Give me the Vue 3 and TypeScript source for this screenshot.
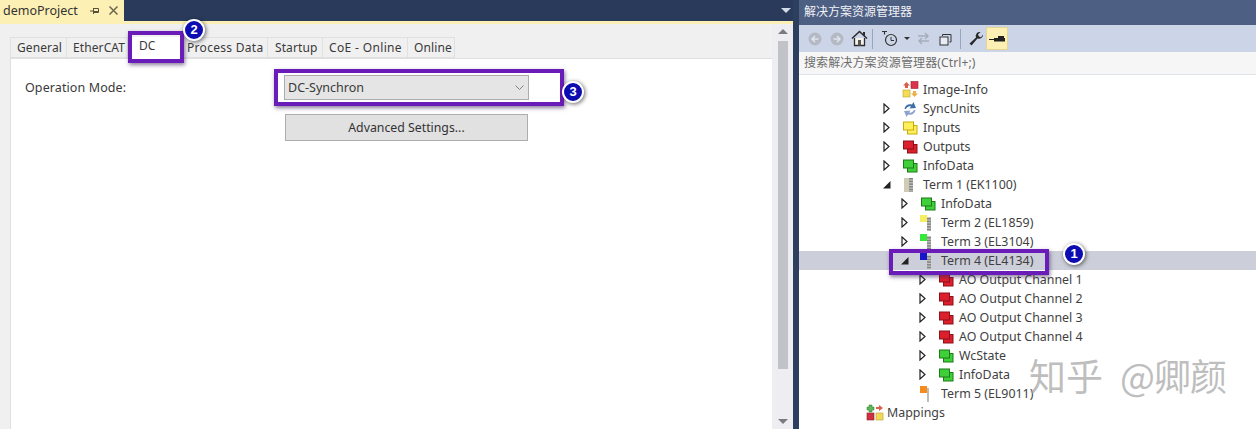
<script setup lang="ts">
type Icon = 'image' | 'sync' | 'yellow' | 'red' | 'green' | 'term' | 'map' | 'none'
interface Row { label: string; depth: number; icon: Icon; expand: '' | 'open' | 'closed'; chip?: string; selected?: boolean; plain?: boolean }

const tabs = ['General', 'EtherCAT', 'DC', 'Process Data', 'Startup', 'CoE - Online', 'Online']
const groupColors: Record<string, string[]> = {
  yellow: ['#fdf05a', '#c9a90e'],
  red: ['#dc1f2c', '#8e1018'],
  green: ['#3fcf38', '#1c7a18'],
}
const rows: Row[] = [
  { label: 'Image-Info', depth: 2, icon: 'image', expand: '' },
  { label: 'SyncUnits', depth: 2, icon: 'sync', expand: 'closed' },
  { label: 'Inputs', depth: 2, icon: 'yellow', expand: 'closed' },
  { label: 'Outputs', depth: 2, icon: 'red', expand: 'closed' },
  { label: 'InfoData', depth: 2, icon: 'green', expand: 'closed' },
  { label: 'Term 1 (EK1100)', depth: 2, icon: 'term', expand: 'open' },
  { label: 'InfoData', depth: 3, icon: 'green', expand: 'closed' },
  { label: 'Term 2 (EL1859)', depth: 3, icon: 'term', expand: 'closed', chip: '#f6ee5c' },
  { label: 'Term 3 (EL3104)', depth: 3, icon: 'term', expand: 'closed', chip: '#35e83a' },
  { label: 'Term 4 (EL4134)', depth: 3, icon: 'term', expand: 'open', chip: '#1616c8', selected: true },
  { label: 'AO Output Channel 1', depth: 4, icon: 'red', expand: 'closed' },
  { label: 'AO Output Channel 2', depth: 4, icon: 'red', expand: 'closed' },
  { label: 'AO Output Channel 3', depth: 4, icon: 'red', expand: 'closed' },
  { label: 'AO Output Channel 4', depth: 4, icon: 'red', expand: 'closed' },
  { label: 'WcState', depth: 4, icon: 'green', expand: 'closed' },
  { label: 'InfoData', depth: 4, icon: 'green', expand: 'closed' },
  { label: 'Term 5 (EL9011)', depth: 3, icon: 'term', expand: '', chip: '#f58a1f', plain: true },
  { label: 'Mappings', depth: 0, icon: 'map', expand: '' },
]
const indent = (d: number) => ({ paddingLeft: `${88 + d * 18}px` })
</script>

<template>
  <div class="app">
    <section class="doc">
      <header class="doc-head">
        <div class="doc-tab">
          <span class="doc-title">demoProject</span>
          <svg class="pin" width="12" height="12" viewBox="0 0 12 12"><path d="M1 6h3M4.500 3v6M4.500 3.500h5v4h-5M4.500 6.500h5" fill="none" stroke="#57503a" stroke-width="1" /></svg>
          <svg class="close" width="11" height="11" viewBox="0 0 11 11"><path d="M1.500 1.500l8 8M9.500 1.500l-8 8" stroke="#6b6550" stroke-width="1.500" /></svg>
        </div>
        <span class="doc-menu"></span>
      </header>
      <div class="doc-body">
        <div class="editor">
          <nav class="tabs">
            <span v-for="t in tabs" :key="t" class="tab" :class="{ active: t === 'DC' }">{{ t }}</span>
          </nav>
          <div class="panel">
            <div class="form">
              <label class="field-label">Operation Mode:</label>
              <div class="select">
                <span>DC-Synchron</span>
                <svg width="9" height="5" viewBox="0 0 9 5"><path d="M.5.500L4.500 4.500 8.500.500" fill="none" stroke="#808080" stroke-width="1" /></svg>
              </div>
              <span></span>
              <button class="adv" type="button">Advanced Settings...</button>
            </div>
          </div>
        </div>
        <aside class="scroll">
          <span class="arrow up"></span>
          <span class="thumb"></span>
          <span class="arrow down"></span>
        </aside>
      </div>
    </section>

    <section class="explorer">
      <header class="exp-head">解决方案资源管理器</header>
      <div class="toolbar">
        <svg width="16" height="16" viewBox="0 0 16 16"><circle cx="8" cy="8" r="6.500" fill="#b4b9c4" /><path d="M11.500 8h-6M8 5L5 8l3 3" fill="none" stroke="#dfe4ee" stroke-width="1.500" /></svg>
        <svg class="t6" width="16" height="16" viewBox="0 0 16 16"><circle cx="8" cy="8" r="6.500" fill="#b4b9c4" /><path d="M4.500 8h6M8 5l3 3-3 3" fill="none" stroke="#dfe4ee" stroke-width="1.500" /></svg>
        <svg class="t6" width="17" height="17" viewBox="0 0 17 17"><path d="M1 8.500L8.500 1.500 16 8.500" fill="none" stroke="#2c2c2c" stroke-width="1.600" /><path d="M3.500 8v7.500h10V8" fill="#f4f1e8" stroke="#2c2c2c" stroke-width="1.300" /><rect x="7" y="10" width="3" height="5.500" fill="#555" /><rect x="12" y="2" width="2" height="4" fill="#2c2c2c" /></svg>
        <i class="sep"></i>
        <svg class="t3" width="18" height="17" viewBox="0 0 18 17"><circle cx="10" cy="10" r="5.500" fill="none" stroke="#333" stroke-width="1.200" /><path d="M10 7v3.500h3" fill="none" stroke="#333" /><path d="M1 1.500h5M3.500 1.500v3" stroke="#333" stroke-width="1.200" /></svg>
        <span class="caret"></span>
        <svg class="t8" width="15" height="15" viewBox="0 0 15 15"><path d="M2 5h10M9 2l3 3-3 3" fill="none" stroke="#a5acb9" stroke-width="1.400" /><path d="M13 10H3M6 7l-3 3 3 3" fill="none" stroke="#a5acb9" stroke-width="1.400" /></svg>
        <svg class="t8b" width="14" height="14" viewBox="0 0 14 14"><rect x="1" y="5" width="8" height="8" fill="#e8ecf4" stroke="#333" /><path d="M3.500 4V2.500H12V10h-1.500" fill="none" stroke="#333" /></svg>
        <i class="sep s2"></i>
        <svg class="t7" width="16" height="16" viewBox="0 0 16 16"><path d="M15 3.500a4 4 0 0 1-5.500 4L3.500 14.500 1.500 12.500 8 6.500a4 4 0 0 1 4.500-5.500l-2.500 2.500 1 2 2 .8z" fill="#2a2a2a" /></svg>
        <span class="pin-btn"><svg width="16" height="7" viewBox="0 0 16 7"><path d="M0 4.500h5" stroke="#222" /><rect x="5" y="3" width="11" height="3.500" fill="#222" /><rect x="9" y="1" width="6" height="2" fill="#222" /></svg></span>
      </div>
      <div class="search">搜索解决方案资源管理器(Ctrl+;)</div>
      <ul class="tree">
        <li v-for="(r, i) in rows" :key="i" class="row" :class="{ selected: r.selected }" :style="indent(r.depth)">
          <svg v-if="r.expand === 'closed'" class="twist" width="7" height="11" viewBox="0 0 7 11"><path d="M1 1l5 4.500-5 4.500z" fill="none" stroke="#222" stroke-width="1.200" /></svg>
          <svg v-else-if="r.expand === 'open'" class="twist" width="8" height="8" viewBox="0 0 8 8"><path d="M0 7.500L7.500 0v7.500z" fill="#222" /></svg>
          <span class="ico">
            <svg v-if="r.icon === 'image'" width="18" height="17" viewBox="0 0 18 17">
              <rect x="9" y="0.500" width="7" height="7" fill="#d9344a" stroke="#9a2030" stroke-width=".6" />
              <rect x="1" y="9" width="7" height="7" fill="#f4dc55" stroke="#bda62e" stroke-width=".6" />
              <path d="M4.500 1L1 4.500h2V7h3V4.500h2z" fill="#d9604c" />
              <path d="M12.500 16L16 12.500h-2V10h-3v2.500H9z" fill="#eeb04d" />
            </svg>
            <svg v-else-if="r.icon === 'sync'" width="16" height="16" viewBox="0 0 16 16">
              <path d="M2.500 8C3 4 6.500 2.500 10 3.500L11.500 1l2.500 6-6.500.5L9 5.500C7 5 5 6 4 8z" fill="#3f6fa8" />
              <path d="M13.500 9c-.6 4-4 5.400-7.500 4.500L4.500 16 2 10l6.500-.5L7 11.500c2 .5 4-.5 5-2.500z" fill="#8ea2cf" />
            </svg>
            <svg v-else-if="r.icon === 'yellow' || r.icon === 'red' || r.icon === 'green'" width="16" height="14" viewBox="0 0 16 14">
              <rect x="5.500" y="4.500" width="9.500" height="8.500" :fill="groupColors[r.icon][0]" :stroke="groupColors[r.icon][1]" />
              <rect x="1.500" y="1" width="10" height="8" :fill="groupColors[r.icon][0]" :stroke="groupColors[r.icon][1]" />
            </svg>
            <svg v-else-if="r.icon === 'term'" width="18" height="16" viewBox="0 0 18 16">
              <rect v-if="r.chip" x="0" y="0" width="7" height="7" :fill="r.chip" />
              <rect v-if="!r.chip" x="2" y="1" width="5" height="14" fill="#cfcbb5" />
              <template v-if="r.plain">
                <rect x="7" y="2" width="2" height="14" fill="#bdbdb8" />
              </template>
              <template v-else>
                <rect x="7" :y="r.chip ? 2 : 1" width="4" height="14" fill="#c4c4c0" />
                <path :d="r.chip ? 'M8 3v13M10 3v13' : 'M8 1v14M10 1v14'" stroke="#444" stroke-dasharray="1.500 1.200" stroke-width="1" />
              </template>
            </svg>
            <svg v-else-if="r.icon === 'map'" width="18" height="17" viewBox="0 0 18 17">
              <rect x="1" y="9" width="7" height="7" fill="#cf3040" stroke="#8f1f2a" stroke-width=".6" />
              <rect x="10" y="9" width="7" height="7" fill="#f2d95a" stroke="#b9a02c" stroke-width=".6" />
              <path d="M3 1h3v2h2v3H6v2H3V6H1V3h2z" fill="#5fb55a" stroke="#2d7a2a" stroke-width=".5" />
              <path d="M10 3h3V1l4 3-4 3V5h-3z" fill="#d9604c" />
            </svg>
          </span>
          <span class="label">{{ r.label }}</span>
        </li>
      </ul>
    </section>

    <i class="mark m-tab"></i>
    <i class="mark m-select"></i>
    <i class="mark m-row"></i>
    <b class="badge b2">2</b>
    <b class="badge b3">3</b>
    <b class="badge b1">1</b>
    <div class="watermark"><span>知乎</span><span class="handle">@卿颜</span></div>
  </div>
</template>

<style>
html, body { margin: 0; background: #fff; overflow: hidden; }
</style>

<style scoped>
.app {
  position: relative;
  width: 1256px;
  height: 429px;
  display: flex;
  overflow: hidden;
  font-family: "Noto Sans", "Noto Sans CJK SC", sans-serif;
  font-size: 12px;
  color: #3a3a3a;
  background: #2c3f5f;
}
.doc { width: 793px; display: flex; flex-direction: column; }
.doc-head { height: 21px; display: flex; justify-content: space-between; align-items: center; background: #293a5a; flex: none; }
.doc-tab { width: 124px; height: 21px; box-sizing: border-box; padding-left: 3px; display: flex; align-items: center; background: #fdf0b4; color: #333; font-size: 12.5px; }
.doc-title { width: 86px; }
.pin { margin-right: 7px; flex: none; }
.close { flex: none; }
.doc-menu { margin-right: 2px; width: 0; height: 0; border: 5px solid transparent; border-top: 5px solid #d4dae8; border-bottom: 0; }
.doc-body { flex: 1; display: flex; border-top: 3px solid #fdf0b4; background: #f0f0f0; min-height: 0; }
.editor { width: 772px; padding: 13px 0 0 10px; box-sizing: border-box; display: flex; flex-direction: column; }
.tabs { height: 21px; display: flex; flex: none; position: relative; }
.tab { box-sizing: border-box; height: 21px; padding: 0 5px 0 7px; border: 1px solid #e0e0e0; border-left: 0; line-height: 20px; white-space: nowrap; font-size: 12px; letter-spacing: .1px; color: #3a3a3a; }
.tab:nth-child(1) { width: 57px; padding-left: 6px; border-left: 1px solid #e0e0e0; }
.tab:nth-child(2) { width: 61px; padding-left: 6px; }
.tab.active { width: 55px; height: 23px; margin-bottom: -2px; background: #fff; border: 0; padding: 0 0 0 11px; line-height: 18px; }
.tab:nth-child(4) { width: 85px; padding-left: 4px; letter-spacing: .3px; }
.tab:nth-child(5) { width: 55px; padding-left: 7px; }
.tab:nth-child(6) { width: 85px; padding-left: 6px; letter-spacing: .35px; }
.tab:nth-child(7) { width: 47px; padding-left: 6px; }
.panel { flex: 1; background: #fff; border-top: 1px solid #e0e0e0; border-left: 1px solid #e0e0e0; padding: 16px 0 0 14px; }
.form { display: grid; grid-template-columns: 259px 245px; grid-template-rows: 25px 27px; row-gap: 14px; }
.field-label { align-self: center; font-size: 12.5px; letter-spacing: .1px; }
.select { box-sizing: border-box; display: flex; justify-content: space-between; align-items: center; padding: 0 4px 0 3px; background: #e5e5e5; border: 1px solid #acacac; font-size: 12.5px; }
.adv { box-sizing: border-box; width: 243px; margin-left: 1px; height: 27px; padding: 0; background: #e1e1e1; border: 1px solid #adadad; color: #333; font: inherit; font-size: 12.3px; }
.scroll { width: 21px; display: flex; flex-direction: column; align-items: center; background: #eeeef2; }
.arrow { flex: none; width: 0; height: 0; border: 5px solid transparent; }
.up { margin-top: 5px; border-bottom: 5px solid #7a7a80; border-top: 0; }
.down { margin-top: 50px; border-top: 5px solid #7a7a80; border-bottom: 0; }
.thumb { width: 10px; height: 328px; margin-top: 7px; background: #c2c3c9; flex: none; }
.explorer { flex: 1; margin-left: 6px; display: flex; flex-direction: column; background: #fff; min-width: 0; }
.exp-head { height: 25px; flex: none; padding-left: 5px; line-height: 24px; background: #4d5f82; color: #f0f2f6; font-size: 12px; }
.toolbar { height: 27px; flex: none; padding-left: 8px; display: flex; align-items: center; background: #ccd5e8; }
.t6 { margin-left: 6px; }
.sep { width: 1px; height: 20px; margin: 0 8px 0 4px; background: #9aa5bd; }
.t3 { flex: none; }
.caret { margin: 0 6px 0 5px; border: 3px solid transparent; border-top: 3px solid #333; border-bottom: 0; }
.t8b { margin-left: 8px; }
.s2 { margin-left: 7px; margin-right: 7px; }
.pin-btn { width: 22px; height: 23px; margin-left: 2px; display: flex; align-items: center; justify-content: center; background: #fdf0b4; box-sizing: border-box; border: 1px solid #e5d590; }
.search { height: 23px; flex: none; padding-left: 5px; line-height: 22px; background: #f6f6f6; color: #6d6d6d; font-size: 12px; letter-spacing: .12px; box-sizing: border-box; border-bottom: 1px solid #e0e4ec; }
.tree { flex: 1; margin: 0; padding: 5px 0 0; list-style: none; background: #fff; }
.row { height: 19px; display: flex; align-items: center; position: relative; white-space: nowrap; }
.row.selected { background: #ccced9; }
.twist { position: absolute; margin-left: -40px; }
.ico { position: absolute; margin-left: -21px; width: 18px; height: 17px; display: flex; align-items: center; justify-content: flex-start; }
.label { font-size: 12.4px; color: #3f3f3f; }
.mark { position: absolute; box-sizing: border-box; border: 4px solid #6a1cb8; box-shadow: 1px 2px 4px rgba(60, 40, 90, .6); pointer-events: none; }
.m-tab { left: 128px; top: 31px; width: 56px; height: 32px; }
.m-select { left: 274px; top: 69px; width: 290px; height: 37px; }
.m-row { left: 889px; top: 249px; width: 160px; height: 26px; }
.badge { position: absolute; box-sizing: border-box; width: 22px; height: 22px; border-radius: 50%; background: #0c0cb0; border: 2px solid #fff; box-shadow: 1px 1px 4px rgba(0, 0, 0, .6); color: #fff; text-align: center; font: 700 13px/18px "Liberation Sans", sans-serif; }
.b2 { left: 183px; top: 19px; }
.b3 { left: 562px; top: 81px; }
.b1 { left: 1063px; top: 243px; }
.watermark { position: absolute; left: 1029px; top: 350px; display: flex; gap: 17px; color: rgba(165, 165, 165, .72); font: 400 37px/50px "Noto Sans CJK SC", sans-serif; white-space: nowrap; pointer-events: none; }
.handle { letter-spacing: -1px; }
</style>
